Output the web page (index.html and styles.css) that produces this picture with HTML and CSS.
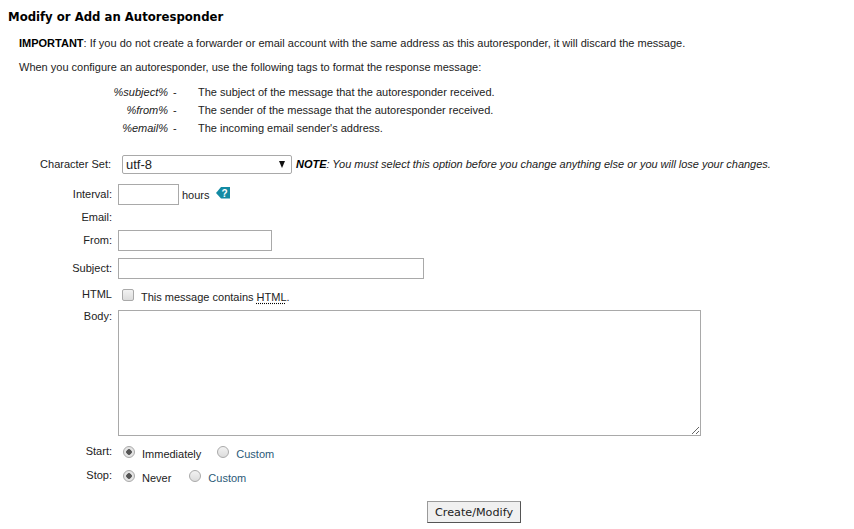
FILE: index.html
```html
<!DOCTYPE html>
<html lang="en">
<head>
<meta charset="utf-8">
<title>Modify or Add an Autoresponder</title>
<link rel="stylesheet" href="styles.css">
</head>
<body>
<h1 class="title">Modify or Add an Autoresponder</h1>
<p class="intro"><strong>IMPORTANT</strong>: If you do not create a forwarder or email account with the same address as this autoresponder, it will discard the message.</p>
<p class="intro second">When you configure an autoresponder, use the following tags to format the response message:</p>
<dl class="tags">
  <div class="tag"><dt>%subject%</dt><dd class="dash">-</dd><dd>The subject of the message that the autoresponder received.</dd></div>
  <div class="tag"><dt>%from%</dt><dd class="dash">-</dd><dd>The sender of the message that the autoresponder received.</dd></div>
  <div class="tag"><dt>%email%</dt><dd class="dash">-</dd><dd>The incoming email sender's address.</dd></div>
</dl>
<form class="form">
  <div class="row charset">
    <label class="label">Character Set:</label>
    <div class="fake-select"><span>utf-8</span><span class="arrow"></span></div>
    <span class="note"><b>NOTE</b>: You must select this option before you change anything else or you will lose your changes.</span>
  </div>
  <div class="row interval">
    <label class="label">Interval:</label>
    <input class="field w-interval" type="text">
    <span class="hours">hours</span>
    <svg class="help" width="14" height="13" viewBox="0 0 14 13" aria-hidden="true"><path d="M5 0h9v11.500h-9L0 6z" fill="#138aa3"/><text x="8.500" y="9.700" text-anchor="middle" class="help-q">?</text></svg>
  </div>
  <div class="row email"><label class="label">Email:</label></div>
  <div class="row from"><label class="label">From:</label><input class="field w-from" type="text"></div>
  <div class="row subject"><label class="label">Subject:</label><input class="field w-subject" type="text"></div>
  <div class="row html">
    <label class="label">HTML</label>
    <span class="check"></span>
    <span class="check-text">This message contains <abbr class="abbr">HTML</abbr>.</span>
  </div>
  <div class="row body-row">
    <label class="label">Body:</label>
    <textarea class="field body-box"></textarea>
  </div>
  <div class="row when start">
    <label class="label">Start:</label>
    <span class="radio on"></span><span class="opt first">Immediately</span>
    <span class="radio"></span><span class="opt custom">Custom</span>
  </div>
  <div class="row when stop">
    <label class="label">Stop:</label>
    <span class="radio on"></span><span class="opt first">Never</span>
    <span class="radio"></span><span class="opt custom">Custom</span>
  </div>
  <div class="actions"><button class="button" type="button">Create/Modify</button></div>
</form>
</body>
</html>
```
FILE: styles.css
```css
* { box-sizing: border-box; }
html, body { margin: 0; background: #fff; }
body {
  width: 854px;
  height: 529px;
  overflow: hidden;
  padding: 10px 0 0 8px;
  font-family: "Liberation Sans", Arial, sans-serif;
  font-size: 11px;
  color: #222;
}
.title {
  margin: 0;
  font-family: "DejaVu Sans", Verdana, sans-serif;
  font-size: 11.7px;
  line-height: 14px;
  font-weight: bold;
  color: #000;
}
.intro { margin: 13px 0 0 11px; line-height: 13px; }
.intro.second { margin-top: 11px; }
.intro strong { color: #000; }
.tags { margin: 12px 0 0; }
.tag { display: flex; height: 18px; line-height: 13px; }
.tag dt { width: 160px; text-align: right; font-style: italic; }
.tag dd { margin: 0; }
.tag .dash { width: 30px; padding-left: 5px; }
.form { margin-top: 15px; }
.row { display: flex; align-items: flex-start; }
.label { width: 104px; text-align: right; flex: none; line-height: 13px; }
.field {
  display: block;
  flex: none;
  margin: 0 0 0 6px;
  border: 1px solid #a9a9a9;
  background: #fff;
  padding: 0;
  border-radius: 0;
}
.charset { height: 29px; }
.charset .label { padding-top: 3px; width: 103px; }
.fake-select {
  margin-left: 11px;
  width: 170px;
  height: 19px;
  border: 1px solid #a9a9a9;
  border-radius: 2px;
  display: flex;
  justify-content: space-between;
  align-items: center;
  padding: 0 6px 0 3px;
  font-size: 13px;
  color: #222;
  flex: none;
}
.arrow {
  width: 0;
  height: 0;
  border-left: 3.500px solid transparent;
  border-right: 3.500px solid transparent;
  border-top: 7px solid #111;
}
.note { margin-left: 4px; padding-top: 3px; font-style: italic; line-height: 13px; white-space: nowrap; letter-spacing: -0.02px; }
.note b { color: #000; }
.interval { height: 26px; }
.interval .label { padding-top: 4px; }
.w-interval { width: 61px; height: 21px; }
.hours { margin-left: 3px; padding-top: 5px; line-height: 13px; }
.help { margin: 3px 0 0 6px; flex: none; }
.help-q { font: bold 10px "Liberation Sans", sans-serif; fill: #fff; }
.email { height: 20px; padding-top: 1px; }
.from { height: 28px; }
.from .label { padding-top: 4px; }
.w-from { width: 154px; height: 21px; }
.subject { height: 28px; }
.subject .label { padding-top: 4px; }
.w-subject { width: 306px; height: 21px; }
.html { height: 24px; padding-top: 2px; }
.check {
  margin: 1px 0 0 10px;
  width: 12px;
  height: 12px;
  border: 1px solid #a9a9a9;
  border-radius: 2px;
  background: linear-gradient(#f2f2f2, #dcdcdc);
  flex: none;
}
.check-text { margin-left: 7px; padding-top: 3px; line-height: 13px; }
.abbr { text-decoration: underline dotted #000; text-underline-offset: 2px; }
.body-row { height: 136px; }
.body-row .label { margin-top: -1px; padding-top: 1px; }
.body-box { width: 583px; height: 126px; resize: both; }
.when { height: 24px; }
.when .label { margin-top: -1px; }
.radio {
  width: 12px;
  height: 12px;
  border: 1px solid #a9a9a9;
  border-radius: 50%;
  background: linear-gradient(#f2f2f2, #dcdcdc);
  flex: none;
  position: relative;
}
.radio.on { background: radial-gradient(circle, #555 0 2.500px, #e4e4e4 3px); }
.when .radio.on { margin-left: 11px; }
.opt { padding-top: 2px; line-height: 13px; margin-left: 7px; }
.start .opt.first { margin-right: 16px; }
.stop .opt.first { margin-right: 18px; }
.opt.custom { color: #2b5a78; }
.actions { display: flex; padding: 0 0 0 419px; margin-top: 7px; }
.button {
  width: 94px;
  height: 22px;
  padding: 1px 0 0;
  background: #f0f0f0;
  border: 1px solid #9a9a9a;
  border-right-color: #555;
  border-bottom-color: #555;
  font-family: "DejaVu Sans", Verdana, sans-serif;
  font-size: 11.2px;
  color: #222;
}
```
